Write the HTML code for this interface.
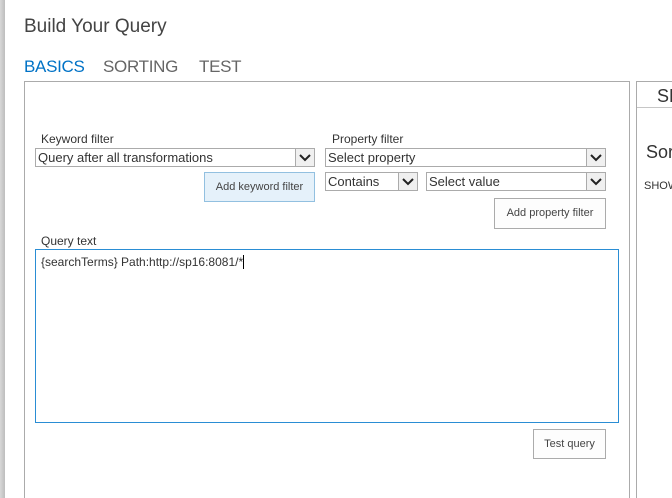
<!DOCTYPE html>
<html><head><style>
html,body{margin:0;width:672px;height:498px;overflow:hidden}
body{background:#fff;font-family:"Liberation Sans",sans-serif;position:relative;color:#444}
.a{position:absolute}
.sel{position:absolute;border:1px solid #ababab;background:#fff;font-size:13px;color:#333;box-sizing:border-box;line-height:17px;padding-left:2px}
.arr{position:absolute;right:0;top:0;width:18px;height:17px;border-left:1px solid #ababab;background:#f0f0f0}
.btn{position:absolute;border:1px solid #ababab;background:#fdfdfd;font-size:11px;color:#444;box-sizing:border-box;text-align:center}
</style></head><body>
<div class="a" style="left:0;top:0;width:5px;height:498px;background:linear-gradient(90deg,#d8d8d8,#bdbdbd)"></div>
<div class="a" style="left:24px;top:16px;font-size:19px;color:#444">Build Your Query</div>
<div class="a" style="left:24px;top:57px;font-size:17px;color:#0072c6;letter-spacing:-0.3px">BASICS</div>
<div class="a" style="left:103px;top:57px;font-size:17px;color:#666;letter-spacing:-0.3px">SORTING</div>
<div class="a" style="left:199px;top:57px;font-size:17px;color:#666;letter-spacing:-0.3px">TEST</div>
<div class="a" style="left:24px;top:81px;width:606px;height:430px;border:1px solid #ababab;box-sizing:border-box"></div>
<div class="a" style="left:636px;top:81px;width:50px;height:430px;border:1px solid #ababab;box-sizing:border-box"></div>
<div class="a" style="left:637px;top:107px;width:40px;height:1px;background:#c6c6c6"></div>
<div class="a" style="left:657px;top:86px;font-size:18px;color:#333">SE</div>
<div class="a" style="left:646px;top:142px;font-size:18px;color:#333">Sor</div>
<div class="a" style="left:644px;top:180px;font-size:11px;color:#333">SHOW</div>

<div class="a" style="left:41px;top:132px;font-size:12px;color:#333">Keyword filter</div>
<div class="sel" style="left:35px;top:148px;width:280px;height:19px">Query after all transformations<svg class="arr" viewBox="0 0 18 17"><path d="M4 6l5 5 5-5" stroke="#222" stroke-width="2" fill="none"/></svg></div>
<div class="btn" style="left:204px;top:172px;width:111px;height:30px;line-height:28px;background:#e5f1fa;border-color:#92c0e0">Add keyword filter</div>

<div class="a" style="left:332px;top:132px;font-size:12px;color:#333">Property filter</div>
<div class="sel" style="left:325px;top:148px;width:281px;height:19px">Select property<svg class="arr" viewBox="0 0 18 17"><path d="M4 6l5 5 5-5" stroke="#222" stroke-width="2" fill="none"/></svg></div>
<div class="sel" style="left:325px;top:172px;width:93px;height:19px">Contains<svg class="arr" viewBox="0 0 18 17"><path d="M4 6l5 5 5-5" stroke="#222" stroke-width="2" fill="none"/></svg></div>
<div class="sel" style="left:426px;top:172px;width:180px;height:19px">Select value<svg class="arr" viewBox="0 0 18 17"><path d="M4 6l5 5 5-5" stroke="#222" stroke-width="2" fill="none"/></svg></div>
<div class="btn" style="left:494px;top:198px;width:112px;height:31px;line-height:29px">Add property filter</div>

<div class="a" style="left:41px;top:234px;font-size:12px;color:#333">Query text</div>
<div class="a" style="left:35px;top:249px;width:584px;height:174px;border:1px solid #2a8dd4;box-sizing:border-box"></div>
<div class="a" style="left:41px;top:255px;font-size:12px;color:#333">{searchTerms} Path:http://sp16:8081/*<span style="display:inline-block;width:1px;height:14px;background:#000;vertical-align:-3px"></span></div>
<div class="btn" style="left:533px;top:429px;width:73px;height:30px;line-height:28px">Test query</div>
</body></html>
